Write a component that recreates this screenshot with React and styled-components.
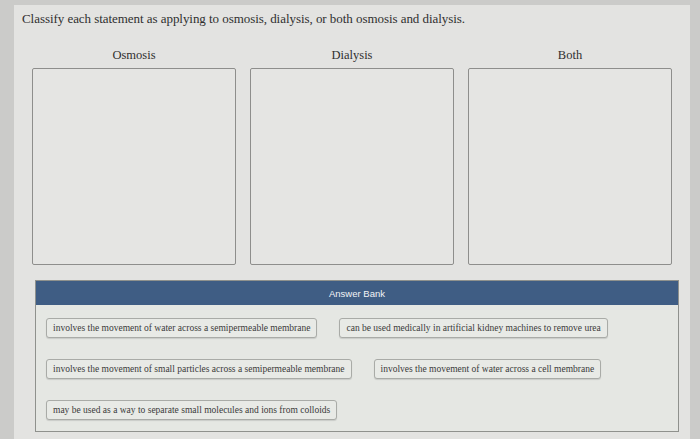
import React from 'react'
import styled, { createGlobalStyle } from 'styled-components'

const GlobalStyle = createGlobalStyle`
  html, body {
    margin: 0;
    padding: 0;
    background: #cfcfcd;
  }
`

const columns = ['Osmosis', 'Dialysis', 'Both']

const answers = [
  'involves the movement of water across a semipermeable membrane',
  'can be used medically in artificial kidney machines to remove urea',
  'involves the movement of small particles across a semipermeable membrane',
  'involves the movement of water across a cell membrane',
  'may be used as a way to separate small molecules and ions from colloids'
]

export default function App() {
  return (
    <>
      <GlobalStyle />
      <Page>
        <Panel>
          <Question>
            Classify each statement as applying to osmosis, dialysis, or both osmosis and dialysis.
          </Question>
          <Targets>
            {columns.map(name => (
              <Target key={name}>
                <TargetLabel>{name}</TargetLabel>
                <DropZone />
              </Target>
            ))}
          </Targets>
          <Bank>
            <BankHeader>Answer Bank</BankHeader>
            <BankBody>
              {answers.map(text => (
                <Chip key={text}>{text}</Chip>
              ))}
            </BankBody>
          </Bank>
        </Panel>
      </Page>
    </>
  )
}

const Page = styled.div`
  width: 700px;
  height: 439px;
  overflow: hidden;
  padding: 5px 10px 0 14px;
  box-sizing: border-box;
  background: #cbcbc9;
`
const Panel = styled.div`
  height: 100%;
  background: #e3e3e1;
  padding: 6px 0 0 8px;
  box-sizing: border-box;
  font-family: "Liberation Serif", "Times New Roman", serif;
  color: #2f2f2f;
`
const Question = styled.div`
  font-size: 13px;
  line-height: 16px;
  letter-spacing: -0.05px;
`
const Targets = styled.div`
  display: grid;
  grid-template-columns: repeat(3, 204px);
  column-gap: 14px;
  margin: 20px 0 0 10px;
`
const Target = styled.div`
  display: flex;
  flex-direction: column;
  align-items: center;
`
const TargetLabel = styled.div`
  font-size: 12.5px;
  line-height: 16px;
  margin-bottom: 5px;
`
const DropZone = styled.div`
  width: 100%;
  height: 197px;
  box-sizing: border-box;
  border: 1.5px solid #8e8e8c;
  border-radius: 2px;
  background: #e5e5e3;
`
const Bank = styled.div`
  width: 642px;
  margin: 15px 0 0 13px;
  border: 1px solid #8f918d;
  background: #e5e7e3;
`
const BankHeader = styled.div`
  height: 24px;
  background: #3f5d84;
  color: #f2f4f6;
  font-family: "Liberation Sans", Arial, sans-serif;
  font-size: 9.5px;
  display: flex;
  align-items: center;
  justify-content: center;
`
const BankBody = styled.div`
  display: flex;
  flex-wrap: wrap;
  gap: 21px 22px;
  padding: 13px 10px 11px;
`
const Chip = styled.div`
  height: 20px;
  padding: 0 6px;
  display: flex;
  align-items: center;
  box-sizing: border-box;
  border: 1px solid #a9aba7;
  border-radius: 3px;
  background: #e8eae6;
  box-shadow: 0 1px 1px rgba(0, 0, 0, 0.12);
  font-size: 9.5px;
  color: #3a3a3a;
  white-space: nowrap;
`
